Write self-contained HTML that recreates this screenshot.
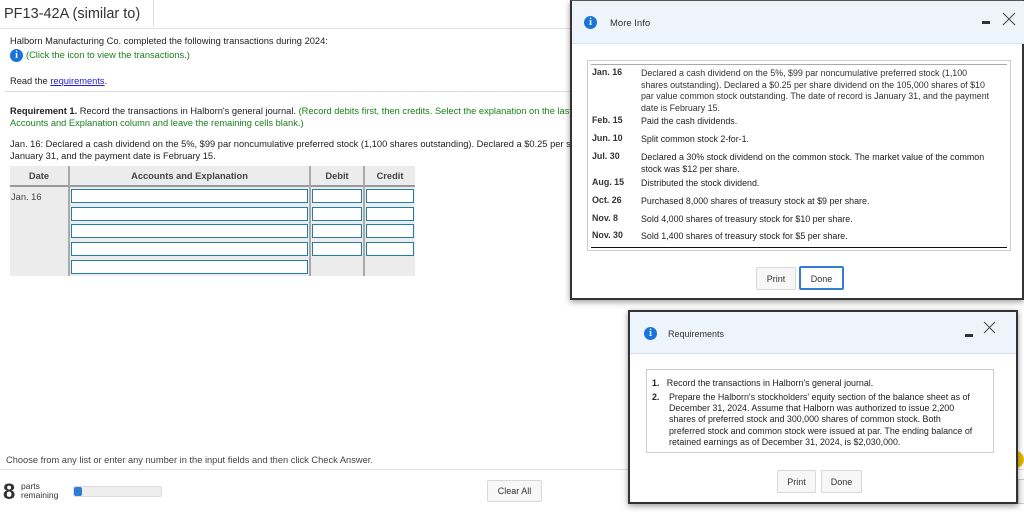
<!DOCTYPE html>
<html><head><style>
*{margin:0;padding:0;box-sizing:border-box}
body{width:1024px;height:512px;position:relative;overflow:hidden;background:#fff;font-family:"Liberation Sans",Arial,sans-serif;color:#222;font-size:9.3px}
.a{position:absolute;white-space:nowrap}
.g{color:#1a7f1a}
.inp{position:absolute;border:1px solid #1f7fa8;background:#fff;height:14px}
.ic{position:absolute;width:13px;height:13px;border-radius:50%;background:#1a73d9;color:#fff;font:bold 10px "Liberation Serif",serif;text-align:center;line-height:13px}
.btn{position:absolute;border:1px solid #d8d8d8;background:#f7f7f7;font-size:9px;text-align:center;border-radius:2px;color:#333}
.m{font-size:8.9px}
</style></head><body>
<div class="a" style="left:4px;top:6px;font-size:14.5px;color:#333">PF13-42A (similar to)</div>
<div class="a" style="left:153px;top:0;width:1px;height:27px;background:#ddd"></div>
<div class="a" style="left:0;top:28px;width:570px;height:1px;background:#e4e4e4"></div>
<div class="a" style="left:10px;top:36px">Halborn Manufacturing Co. completed the following transactions during 2024:</div>
<div class="ic" style="left:10px;top:49px">i</div>
<div class="a g" style="left:26px;top:50px">(Click the icon to view the transactions.)</div>
<div class="a" style="left:10px;top:76px">Read the <span style="color:#2222cc;text-decoration:underline">requirements</span>.</div>
<div class="a" style="left:5px;top:91px;width:565px;height:1px;background:#ddd"></div>
<div class="a" style="left:10px;top:106px"><b>Requirement 1.</b> Record the transactions in Halborn's general journal. <span class="g">(Record debits first, then credits. Select the explanation on the last</span></div>
<div class="a g" style="left:10px;top:118px">Accounts and Explanation column and leave the remaining cells blank.)</div>
<div class="a" style="left:10px;top:139px">Jan. 16: Declared a cash dividend on the 5%, $99 par noncumulative preferred stock (1,100 shares outstanding). Declared a $0.25 per sh</div>
<div class="a" style="left:10px;top:151px">January 31, and the payment date is February 15.</div>
<div class="a" style="left:10px;top:166px;width:405px;height:110px;background:#ececec"></div>
<div class="a" style="left:10px;top:185px;width:405px;height:2px;background:#999"></div>
<div class="a" style="left:68px;top:166px;width:2px;height:110px;background:#aaa"></div>
<div class="a" style="left:309px;top:166px;width:2px;height:110px;background:#aaa"></div>
<div class="a" style="left:363px;top:166px;width:2px;height:110px;background:#aaa"></div>
<div class="a" style="left:10px;top:171px;width:58px;text-align:center;font-weight:bold;color:#444">Date</div>
<div class="a" style="left:70px;top:171px;width:239px;text-align:center;font-weight:bold;color:#444">Accounts and Explanation</div>
<div class="a" style="left:311px;top:171px;width:52px;text-align:center;font-weight:bold;color:#444">Debit</div>
<div class="a" style="left:365px;top:171px;width:50px;text-align:center;font-weight:bold;color:#444">Credit</div>
<div class="a" style="left:11px;top:192px;color:#444">Jan. 16</div>
<div class="inp" style="left:71px;top:189px;width:237px"></div><div class="inp" style="left:312px;top:189px;width:50px"></div><div class="inp" style="left:366px;top:189px;width:48px"></div>
<div class="inp" style="left:71px;top:207px;width:237px"></div><div class="inp" style="left:312px;top:207px;width:50px"></div><div class="inp" style="left:366px;top:207px;width:48px"></div>
<div class="inp" style="left:71px;top:224px;width:237px"></div><div class="inp" style="left:312px;top:224px;width:50px"></div><div class="inp" style="left:366px;top:224px;width:48px"></div>
<div class="inp" style="left:71px;top:242px;width:237px"></div><div class="inp" style="left:312px;top:242px;width:50px"></div><div class="inp" style="left:366px;top:242px;width:48px"></div>
<div class="inp" style="left:71px;top:260px;width:237px"></div>
<div class="a" style="left:6px;top:455px;color:#444">Choose from any list or enter any number in the input fields and then click Check Answer.</div>
<div class="a" style="left:0;top:469px;width:1024px;height:1px;background:#ddd"></div>
<div class="a" style="left:3px;top:479px;font-size:22px;font-weight:bold;color:#333">8</div>
<div class="a" style="left:21px;top:482px;font-size:8.5px;line-height:9px;color:#333">parts<br>remaining</div>
<div class="a" style="left:73px;top:486px;width:89px;height:11px;background:#eee;border:1px solid #ddd;border-radius:2px"></div>
<div class="a" style="left:74px;top:487px;width:8px;height:9px;background:#2e7fd1;border-radius:2px"></div>
<div class="btn" style="left:487px;top:480px;width:55px;height:22px;line-height:21px">Clear All</div>
<div class="a" style="left:1007px;top:451px;width:17px;height:17px;border-radius:50%;background:#e6b800;color:#333;font-weight:bold;font-size:11px;text-align:center;line-height:17px">?</div>
<div class="a" style="left:1018px;top:479px;width:8px;height:25px;border:1px solid #ccc;background:#f7f7f7"></div>
<div class="a" style="left:570px;top:0;width:454px;height:300px;background:#fff;border:2px solid #333;border-top:1px solid #555;box-shadow:0 2px 6px rgba(0,0,0,.4)">
 <div class="a" style="left:0;top:0;width:452px;height:43px;background:#eef4fb;border-bottom:1px solid #d6e2ef"></div>
 <div class="ic" style="left:12px;top:15px">i</div>
 <div class="a" style="left:38px;top:17px;font-size:9.5px;color:#333">More Info</div>
 <div class="a" style="left:410px;top:20px;width:8px;height:3px;background:#333"></div>
 <svg class="a" style="left:430px;top:11px" width="14" height="14" viewBox="0 0 14 14"><path d="M1 1L13 13M13 1L1 13" stroke="#444" stroke-width="1"/></svg>
 <div class="a" style="left:15px;top:59px;width:424px;height:191px;border:1px solid #ccc"></div>
 <div class="a" style="left:19px;top:63px;width:416px;height:1px;background:#aaa"></div>
 <div class="a" style="left:19px;top:246px;width:416px;height:1px;background:#111"></div>
 <div class="a m" style="left:20px;top:66px;font-weight:bold;color:#333">Jan. 16</div>
 <div class="a m" style="left:69px;top:67px;line-height:11.5px;color:#333">Declared a cash dividend on the 5%, $99 par noncumulative preferred stock (1,100<br>shares outstanding). Declared a $0.25 per share dividend on the 105,000 shares of $10<br>par value common stock outstanding. The date of record is January 31, and the payment<br>date is February 15.</div>
 <div class="a m" style="left:20px;top:114px;font-weight:bold;color:#333">Feb. 15</div><div class="a m" style="left:69px;top:115px">Paid the cash dividends.</div>
 <div class="a m" style="left:20px;top:132px;font-weight:bold;color:#333">Jun. 10</div><div class="a m" style="left:69px;top:133px">Split common stock 2-for-1.</div>
 <div class="a m" style="left:20px;top:150px;font-weight:bold;color:#333">Jul. 30</div><div class="a m" style="left:69px;top:151px;line-height:11.5px">Declared a 30% stock dividend on the common stock. The market value of the common<br>stock was $12 per share.</div>
 <div class="a m" style="left:20px;top:176px;font-weight:bold;color:#333">Aug. 15</div><div class="a m" style="left:69px;top:177px">Distributed the stock dividend.</div>
 <div class="a m" style="left:20px;top:194px;font-weight:bold;color:#333">Oct. 26</div><div class="a m" style="left:69px;top:195px">Purchased 8,000 shares of treasury stock at $9 per share.</div>
 <div class="a m" style="left:20px;top:212px;font-weight:bold;color:#333">Nov. 8</div><div class="a m" style="left:69px;top:213px">Sold 4,000 shares of treasury stock for $10 per share.</div>
 <div class="a m" style="left:20px;top:229px;font-weight:bold;color:#333">Nov. 30</div><div class="a m" style="left:69px;top:230px">Sold 1,400 shares of treasury stock for $5 per share.</div>
 <div class="btn" style="left:184px;top:266px;width:40px;height:23px;line-height:22px">Print</div>
 <div class="btn" style="left:227px;top:265px;width:45px;height:24px;line-height:22px;border:2px solid #2e7fd1;background:#fff">Done</div>
</div>
<div class="a" style="left:628px;top:310px;width:390px;height:194px;background:#fff;border:2px solid #333;box-shadow:0 2px 6px rgba(0,0,0,.4)">
 <div class="a" style="left:0;top:0;width:386px;height:42px;background:#eef4fb;border-bottom:1px solid #d6e2ef"></div>
 <div class="ic" style="left:14px;top:15px">i</div>
 <div class="a" style="left:38px;top:17px;font-size:9px;color:#333">Requirements</div>
 <div class="a" style="left:335px;top:22px;width:8px;height:3px;background:#333"></div>
 <svg class="a" style="left:353px;top:9px" width="13" height="13" viewBox="0 0 13 13"><path d="M1 1L12 12M12 1L1 12" stroke="#444" stroke-width="1"/></svg>
 <div class="a" style="left:16px;top:57px;width:348px;height:84px;border:1px solid #ccc"></div>
 <div class="a m" style="left:22px;top:66px;line-height:11.2px"><b>1.</b>&nbsp;&nbsp; Record the transactions in Halborn's general journal.</div>
 <div class="a m" style="left:22px;top:80px;font-weight:bold">2.</div>
 <div class="a m" style="left:39px;top:80px;line-height:11.2px">Prepare the Halborn's stockholders' equity section of the balance sheet as of<br>December 31, 2024. Assume that Halborn was authorized to issue 2,200<br>shares of preferred stock and 300,000 shares of common stock. Both<br>preferred stock and common stock were issued at par. The ending balance of<br>retained earnings as of December 31, 2024, is $2,030,000.</div>
 <div class="btn" style="left:147px;top:158px;width:39px;height:23px;line-height:22px">Print</div>
 <div class="btn" style="left:191px;top:158px;width:41px;height:23px;line-height:22px">Done</div>
</div>
</body></html>
